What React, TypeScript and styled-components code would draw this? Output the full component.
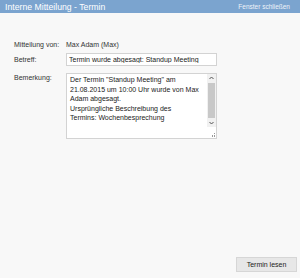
import React from 'react';
import styled, {createGlobalStyle} from 'styled-components';

const GlobalStyle = createGlobalStyle`
  html, body {
    margin: 0;
    padding: 0;
    background: #f8f8f8;
  }
  body {
    font-family: "Liberation Sans", Arial, sans-serif;
    color: #333;
  }
`;

const Page = styled.div`
  display: flex;
  flex-direction: column;
  height: 278px;
  width: 300px;
`;

const Header = styled.div`
  display: flex;
  align-items: center;
  justify-content: space-between;
  height: 13px;
  padding: 0 10px 0 5px;
  background: #7ba4cf;
`;

const Title = styled.span`
  font-size: 8.7px;
  color: #fff;
`;

const CloseLink = styled.a`
  font-size: 6.5px;
  color: #eef3f9;
  cursor: pointer;
`;

const Form = styled.div`
  display: flex;
  flex-direction: column;
  padding: 26px 0 0 14px;
`;

const Row = styled.div<{$gap: number}>`
  display: flex;
  align-items: flex-start;
  margin-top: ${p => p.$gap}px;
`;

const Label = styled.label<{$line: number}>`
  width: 52px;
  font-size: 7px;
  line-height: ${p => p.$line}px;
  color: #333;
`;

const Value = styled.span`
  font-size: 7px;
  line-height: 12px;
  color: #333;
`;

const Input = styled.input`
  box-sizing: border-box;
  width: 151px;
  height: 13px;
  padding: 0 2px;
  border: 1px solid #d3d3d3;
  background: #fff;
  font-family: inherit;
  font-size: 7px;
  color: #222;
  outline: none;
`;

const AreaBox = styled.div`
  box-sizing: border-box;
  display: flex;
  width: 151px;
  height: 66px;
  border: 1px solid #d3d3d3;
  background: #fff;
`;

const TextArea = styled.textarea`
  flex: 1;
  min-width: 0;
  margin: 0;
  padding: 1px 2px 0 3px;
  border: none;
  resize: none;
  overflow: hidden;
  background: transparent;
  font-family: inherit;
  font-size: 7px;
  line-height: 9.6px;
  color: #222;
  outline: none;
`;

const ScrollBar = styled.div`
  display: flex;
  flex-direction: column;
  width: 9px;
  background: #f1f1f1;
`;

const ScrollButton = styled.div`
  display: flex;
  align-items: center;
  justify-content: center;
  height: 8px;
`;

const Track = styled.div`
  display: flex;
  flex: 1;
  padding: 1px 1px;
`;

const Thumb = styled.div`
  flex: 1;
  background: #c8c8c8;
`;

const Corner = styled.div`
  display: flex;
  align-items: flex-end;
  justify-content: flex-end;
  height: 10px;
  background: #fff;
  padding: 0 1px 1px 0;
`;

const Footer = styled.div`
  display: flex;
  justify-content: flex-end;
  margin-top: auto;
  padding: 0 3px 6px 0;
`;

const Button = styled.button`
  box-sizing: border-box;
  width: 61px;
  height: 15px;
  padding: 0;
  border: 1px solid #d6d6d6;
  background: #e7e7e7;
  font-family: inherit;
  font-size: 7px;
  color: #222;
`;

const Chevron = ({up}: {up?: boolean}) => (
  <svg width="5" height="4" viewBox="0 0 5 4">
    <path
      d={up ? 'M0.5 3 L2.5 1 L4.5 3' : 'M0.5 1 L2.5 3 L4.5 1'}
      fill="none"
      stroke="#555"
      strokeWidth="1"
    />
  </svg>
);

const Grip = () => (
  <svg width="4" height="4" viewBox="0 0 4 4">
    <rect x="3" y="0" width="1" height="1" fill="#999"/>
    <rect x="1" y="2" width="1" height="1" fill="#999"/>
    <rect x="3" y="2" width="1" height="1" fill="#999"/>
    <rect x="3" y="3" width="1" height="1" fill="#999"/>
    <rect x="1" y="3" width="1" height="1" fill="#999"/>
  </svg>
);

const remark =
  'Der Termin "Standup Meeting" am\n' +
  '21.08.2015 um 10:00 Uhr wurde von Max\n' +
  'Adam abgesagt.\n' +
  'Ursprüngliche Beschreibung des\n' +
  'Termins: Wochenbesprechung';

function App() {
  return (
    <Page>
      <GlobalStyle/>
      <Header>
        <Title>Interne Mitteilung - Termin</Title>
        <CloseLink>Fenster schließen</CloseLink>
      </Header>
      <Form>
        <Row $gap={0}>
          <Label $line={12}>Mitteilung von:</Label>
          <Value>Max Adam (Max)</Value>
        </Row>
        <Row $gap={2}>
          <Label $line={13}>Betreff:</Label>
          <Input defaultValue="Termin wurde abgesagt: Standup Meeting"/>
        </Row>
        <Row $gap={7}>
          <Label $line={10}>Bemerkung:</Label>
          <AreaBox>
            <TextArea defaultValue={remark}/>
            <ScrollBar>
              <ScrollButton><Chevron up/></ScrollButton>
              <Track><Thumb/></Track>
              <ScrollButton><Chevron/></ScrollButton>
              <Corner><Grip/></Corner>
            </ScrollBar>
          </AreaBox>
        </Row>
      </Form>
      <Footer>
        <Button>Termin lesen</Button>
      </Footer>
    </Page>
  );
}

export default App;
